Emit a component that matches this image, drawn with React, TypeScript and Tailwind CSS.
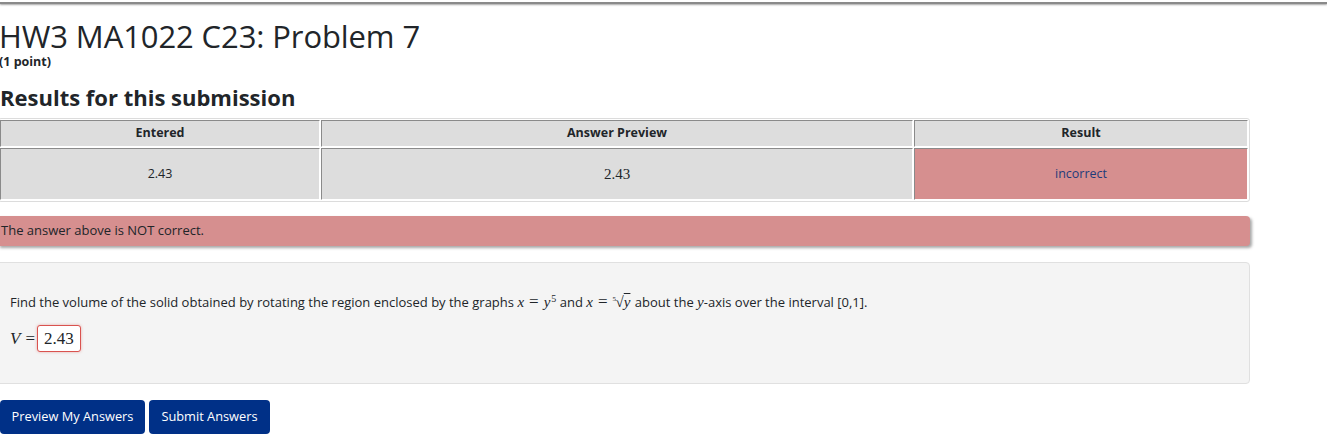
import React from 'react'

const sans = { fontFamily: '"Open Sans", "Noto Sans", sans-serif' }
const serif = { fontFamily: '"Liberation Serif", "DejaVu Serif", serif' }

function MathVar({ children }: { children: React.ReactNode }) {
  return <span className="italic text-[15px]" style={serif}>{children}</span>
}

function Eq() {
  return <span className="text-[17px] leading-[17px] mx-[5px]" style={serif}>=</span>
}

const headCell = 'bg-[#dddddd] border border-t-[#8a8a8a] border-l-[#8a8a8a] border-r-white border-b-white font-bold'
const bodyCell = 'border border-t-[#8a8a8a] border-l-[#8a8a8a] border-r-white border-b-white text-center'

export default function App() {
  return (
    <div className="w-[1327px] h-[445px] bg-white text-[#212529] overflow-hidden" style={sans}>
      <div className="h-[4px] w-full border-b-[2px] border-[#8a8a8a] shadow-[0_1px_2px_rgba(0,0,0,0.35)]" />

      <div className="w-[1252px] -ml-[2px]">
        <h1 className="text-[31px] leading-[34px] mt-[15px] pl-[1px] tracking-[-0.1px]">HW3 MA1022 C23: Problem 7</h1>
        <div className="text-[12.5px] font-bold leading-[15px] mt-[1px] ml-[1px]">(1 point)</div>

        <h2 className="text-[22px] font-bold leading-[28px] mt-[14px] ml-[2px]">Results for this submission</h2>

        <table className="mt-[7px] w-[1252px] border border-[#dcdcdc] rounded-[3px] border-separate border-spacing-[1px] text-[12.5px]">
          <thead>
            <tr className="h-[27px]">
              <th className={`w-[320px] ${headCell}`}>Entered</th>
              <th className={`w-[592px] ${headCell}`}>Answer Preview</th>
              <th className={headCell}>Result</th>
            </tr>
          </thead>
          <tbody>
            <tr className="h-[52px]">
              <td className={`bg-[#dddddd] ${bodyCell}`}>2.43</td>
              <td className={`bg-[#dddddd] ${bodyCell} text-[15px]`} style={serif}>2.43</td>
              <td className={`bg-[#d68f8f] ${bodyCell} text-[#1f3b7a]`}>incorrect</td>
            </tr>
          </tbody>
        </table>

        <div className="mt-[14px] h-[30px] bg-[#d68f8f] rounded-r-[4px] shadow-[2px_2px_3px_rgba(0,0,0,0.35)] flex items-center pl-[3px] text-[13px]">
          The answer above is NOT correct.
        </div>

        <div className="mt-[16px] h-[122px] bg-[#f4f4f4] border border-[#e0e0e0] rounded-r-[4px] pl-[11px] pt-[29px] text-[13px]">
          <p className="leading-[20px] whitespace-nowrap">
            Find the volume of the solid obtained by rotating the region enclosed by the graphs{' '}
            <MathVar>x</MathVar>
            <Eq />
            <MathVar>y</MathVar>
            <sup className="text-[10px] ml-[1px]" style={serif}>5</sup>
            {' '}and{' '}
            <MathVar>x</MathVar>
            <Eq />
            <span className="relative inline-block pl-[3px] pr-[1px] text-[15px]" style={serif}>
              <span className="absolute left-[0px] -top-[3px] text-[7px]">5</span>
              <span>√</span>
              <span className="italic overline">y</span>
            </span>
            {' '}about the <MathVar>y</MathVar>-axis over the interval [0,1].
          </p>
          <div className="mt-[13px] flex items-center">
            <span className="text-[17px]" style={serif}>
              <span className="italic">V</span>
              <span className="ml-[5px]">=</span>
            </span>
            <span className="ml-[2px] bg-white border border-[#d9534f] rounded-[3px] px-[6px] h-[27px] flex items-center text-[17px] shadow-[0_0_3px_rgba(217,83,79,0.45)]" style={serif}>2.43</span>
          </div>
        </div>

        <div className="mt-[16px] ml-[2px] flex gap-[4px]">
          <button className="bg-[#003087] text-white text-[12.8px] h-[34px] rounded-[4px] w-[145px]">Preview My Answers</button>
          <button className="bg-[#003087] text-white text-[12.8px] h-[34px] rounded-[4px] w-[121px]">Submit Answers</button>
        </div>
      </div>
    </div>
  )
}
